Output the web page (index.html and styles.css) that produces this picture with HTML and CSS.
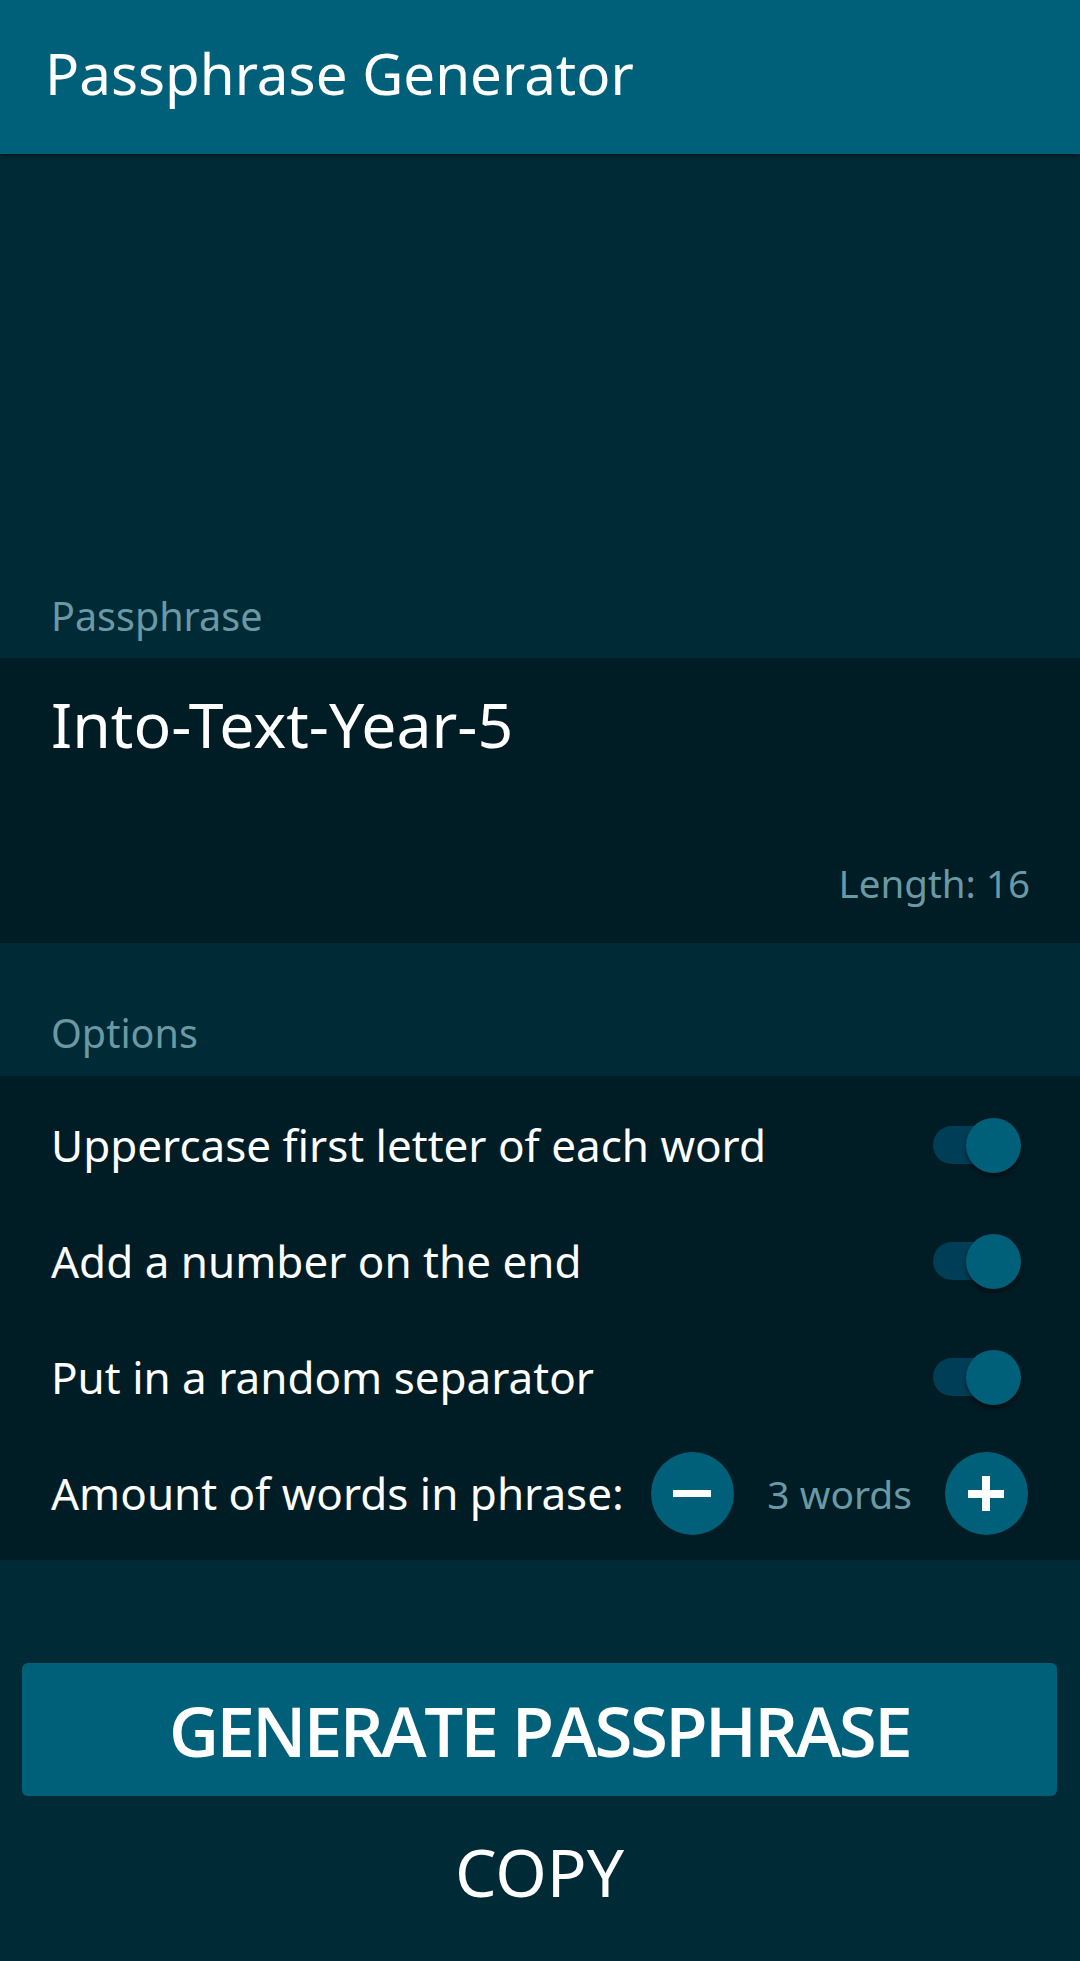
FILE: index.html
```html
<!DOCTYPE html>
<html lang="en">
<head>
<meta charset="utf-8">
<title>Passphrase Generator</title>
<link rel="stylesheet" href="styles.css">
</head>
<body>
<div class="app">
  <header class="appbar">
    <h1 class="appbar-title">Passphrase Generator</h1>
  </header>
  <main class="content">
    <section class="passphrase-section">
      <div class="section-label">Passphrase</div>
      <div class="panel phrase-panel">
        <div class="phrase">Into-Text-Year-5</div>
        <div class="length">Length: 16</div>
      </div>
    </section>
    <section class="options-section">
      <div class="section-label">Options</div>
      <div class="panel options-panel">
        <div class="option-row">
          <span class="option-text">Uppercase first letter of each word</span>
          <span class="switch"><span class="track"></span><span class="thumb"></span></span>
        </div>
        <div class="option-row">
          <span class="option-text">Add a number on the end</span>
          <span class="switch"><span class="track"></span><span class="thumb"></span></span>
        </div>
        <div class="option-row">
          <span class="option-text">Put in a random separator</span>
          <span class="switch"><span class="track"></span><span class="thumb"></span></span>
        </div>
        <div class="option-row">
          <span class="option-text">Amount of words in phrase:</span>
          <span class="stepper">
            <button class="round-btn" aria-label="Fewer words">
              <svg viewBox="0 0 83 83" width="83" height="83"><rect x="22" y="38" width="38" height="7" fill="#ffffff"/></svg>
            </button>
            <span class="count">3 words</span>
            <button class="round-btn" aria-label="More words">
              <svg viewBox="0 0 83 83" width="83" height="83"><rect x="23" y="38" width="36" height="8" fill="#ffffff"/><rect x="37" y="24" width="8" height="35" fill="#ffffff"/></svg>
            </button>
          </span>
        </div>
      </div>
    </section>
    <div class="actions">
      <button class="primary-btn">GENERATE PASSPHRASE</button>
      <button class="text-btn">COPY</button>
    </div>
  </main>
</div>
</body>
</html>
```
FILE: styles.css
```css
* { box-sizing: border-box; }
html, body { margin: 0; padding: 0; }
body {
  background: #002a35;
  font-family: "Noto Sans", "Open Sans", sans-serif;
  color: #ffffff;
  width: 1080px;
  height: 1961px;
  overflow: hidden;
}
.app { display: flex; flex-direction: column; height: 1961px; }
.appbar {
  height: 154px;
  background: #006079;
  display: flex;
  align-items: center;
  padding-left: 45px;
  padding-bottom: 6px;
  box-shadow: 0 2px 4px rgba(0, 0, 0, 0.45);
  position: relative;
  z-index: 1;
}
.appbar-title {
  margin: 0;
  font-size: 56.5px;
  font-weight: 400;
  color: #ffffff;
  line-height: 70px;
}
.content { display: flex; flex-direction: column; }
.passphrase-section { margin-top: 436px; }
.section-label {
  font-size: 39.5px;
  line-height: 52px;
  color: #6a99a5;
  padding: 0 51px 16px;
}
.panel { background: #001c24; }
.phrase-panel {
  height: 285px;
  padding: 26px 51px 34px;
  display: flex;
  flex-direction: column;
}
.phrase { font-size: 62.5px; line-height: 80px; color: #ffffff; }
.length {
  margin-top: 93px;
  font-size: 38.5px;
  line-height: 52px;
  color: #6a99a5;
  text-align: right;
  margin-right: -1px;
}
.options-section { margin-top: 64px; }
.options-section .section-label { padding-bottom: 17px; }
.options-panel { height: 484px; padding: 11px 0 9px; }
.option-row {
  height: 116px;
  display: flex;
  align-items: center;
  justify-content: space-between;
  padding: 0 52px 0 51px;
}
.option-text { font-size: 44px; color: #ffffff; }
.switch {
  position: relative;
  width: 88px;
  height: 55px;
  margin-right: 7px;
  display: flex;
  align-items: center;
}
.track {
  width: 80px;
  height: 38px;
  border-radius: 19px;
  background: #003e57;
}
.thumb {
  position: absolute;
  right: 0;
  top: 0;
  width: 55px;
  height: 55px;
  border-radius: 50%;
  background: #006079;
  box-shadow: 0 3px 4px rgba(0, 0, 0, 0.5);
}
.stepper { display: flex; align-items: center; gap: 33px; }
.round-btn {
  width: 83px;
  height: 83px;
  border-radius: 50%;
  border: 0;
  padding: 0;
  background: #006079;
  display: flex;
  align-items: center;
  justify-content: center;
}
.round-btn svg { display: block; }
.count { font-size: 39px; color: #6a99a5; }
.actions { display: flex; flex-direction: column; padding: 103px 23px 0 22px; }
.primary-btn {
  height: 133px;
  border: 0;
  border-radius: 6px;
  background: #006079;
  color: #ffffff;
  font-family: "Open Sans", "Noto Sans", sans-serif;
  font-size: 69px;
  font-weight: 600;
  letter-spacing: -2.6px;
  padding: 0;
}
.text-btn {
  margin-top: 10px;
  height: 130px;
  border: 0;
  background: transparent;
  color: #ffffff;
  font-family: "Noto Sans", "Open Sans", sans-serif;
  font-size: 66px;
  font-weight: 400;
  padding: 0;
}
```
